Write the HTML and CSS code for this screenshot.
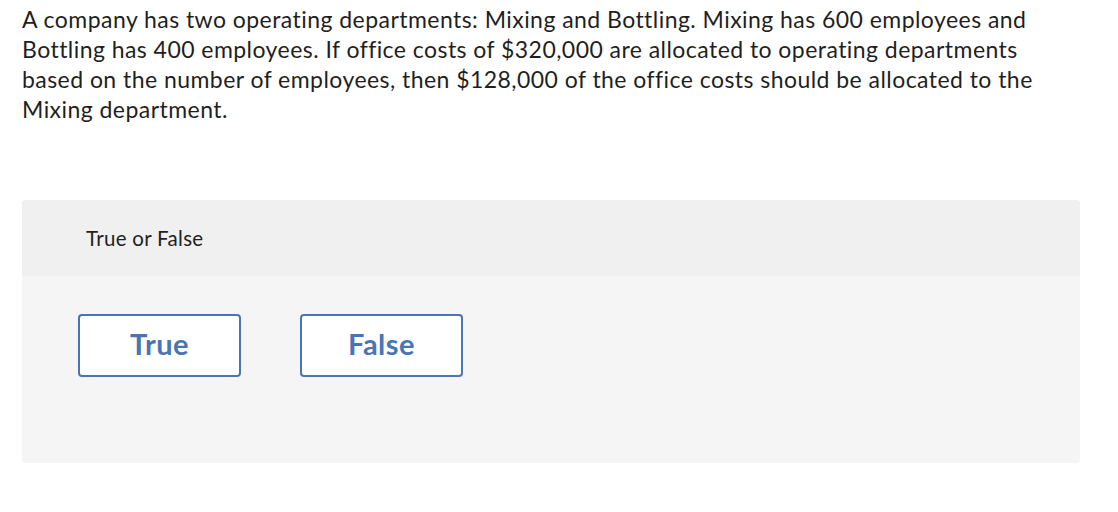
FILE: index.html
```html
<!DOCTYPE html>
<html>
<head>
<meta charset="utf-8">
<link rel="stylesheet" href="styles.css">
</head>
<body>
<div class="page">
  <p class="question">A company has two operating departments: Mixing and Bottling. Mixing has 600 employees and Bottling has 400 employees. If office costs of $320,000 are allocated to operating departments based on the number of employees, then $128,000 of the office costs should be allocated to the Mixing department.</p>
  <div class="panel">
    <div class="panel-head">True or False</div>
    <div class="panel-body">
      <button class="choice">True</button>
      <button class="choice">False</button>
    </div>
  </div>
</div>
</body>
</html>
```
FILE: styles.css
```css
html, body {
  margin: 0;
  padding: 0;
  background: #fff;
}
.page {
  padding: 4px 38px 0 22px;
  font-family: Lato, "Open Sans", sans-serif;
  color: #1f1f1f;
}
.question {
  margin: 0;
  max-width: 1040px;
  font-size: 23px;
  line-height: 30px;
  letter-spacing: 0.45px;
}
.panel {
  margin-top: 76px;
  background: #f5f5f5;
  border-radius: 4px;
  overflow: hidden;
}
.panel-head {
  background: #f0f0f0;
  height: 76px;
  display: flex;
  align-items: center;
  padding-left: 64px;
  font-size: 20.5px;
  letter-spacing: 0.3px;
}
.panel-body {
  display: flex;
  gap: 59px;
  padding: 38px 0 86px 56px;
}
.choice {
  width: 163px;
  height: 63px;
  background: #fff;
  border: 2px solid #4a75b5;
  border-radius: 4px;
  color: #4a75b5;
  font-family: Lato, "Open Sans", sans-serif;
  font-weight: 700;
  font-size: 29px;
  letter-spacing: 0.5px;
  padding: 0 0 4px;
}
```
